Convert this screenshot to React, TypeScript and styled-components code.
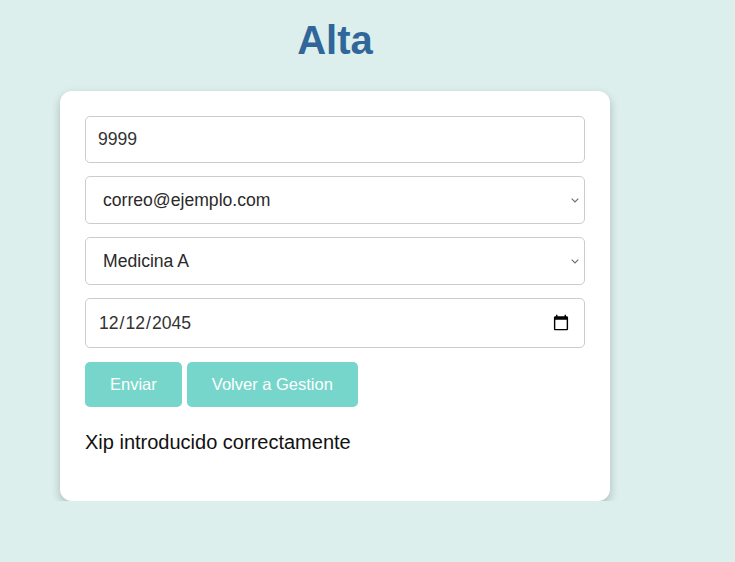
import React, { useState } from 'react'
import styled, { createGlobalStyle } from 'styled-components'

const GlobalStyle = createGlobalStyle`
  html, body {
    margin: 0;
    padding: 0;
    background-color: #dcefed;
    font-family: 'Liberation Sans', Arial, sans-serif;
  }
`

const Page = styled.div`
  width: 550px;
  margin-left: 60px;
  padding-top: 18px;
`

const Title = styled.h1`
  margin: 0 0 28px;
  text-align: center;
  font-size: 40px;
  font-weight: 700;
  color: #306699;
`

const Card = styled.form`
  box-sizing: border-box;
  background: #fff;
  border-radius: 12px;
  padding: 25px 25px 47px;
  box-shadow: 0 4px 10px rgba(0, 0, 0, 0.22);
  display: flex;
  flex-direction: column;
  gap: 13px;
`

const Field = styled.input<{ $tall?: boolean }>`
  box-sizing: border-box;
  width: 100%;
  height: ${(props) => (props.$tall ? '50px' : '47px')};
  padding: 0 12px;
  border: 1px solid #ccc;
  border-radius: 5px;
  font-family: 'Liberation Sans', Arial, sans-serif;
  font-size: 17.6px;
  color: #333;
  background: #fff;
  outline: none;
`

const SelectWrap = styled.div`
  position: relative;
`

const Select = styled.select`
  box-sizing: border-box;
  width: 100%;
  height: 48px;
  padding: 0 30px 0 17px;
  appearance: none;
  border: 1px solid #ccc;
  border-radius: 5px;
  font-family: 'Liberation Sans', Arial, sans-serif;
  font-size: 17.6px;
  color: #2a2a2a;
  background: #fff;
  outline: none;
`

const Chevron = styled.svg`
  position: absolute;
  right: 6px;
  top: 22px;
  width: 8px;
  height: 5px;
  pointer-events: none;
`

const Actions = styled.div`
  display: flex;
  gap: 5px;
  margin-top: 1px;
`

const Button = styled.button`
  height: 45px;
  padding: 0 25px;
  border: none;
  border-radius: 5px;
  background-color: #76d6cb;
  color: #fff;
  font-family: 'Liberation Sans', Arial, sans-serif;
  font-size: 16.5px;
  cursor: pointer;
`

const Message = styled.p`
  margin: 11px 0 0;
  font-size: 20px;
  color: #111;
`

function Dropdown({
  value,
  options,
  onChange,
}: {
  value: string
  options: string[]
  onChange: (v: string) => void
}) {
  return (
    <SelectWrap>
      <Select value={value} onChange={(e) => onChange(e.target.value)}>
        {options.map((o) => (
          <option key={o}>{o}</option>
        ))}
      </Select>
      <Chevron viewBox="0 0 8 5">
        <path d="M0.7 0.7 L4 4 L7.3 0.7" fill="none" stroke="#6b6b6b" strokeWidth="1.1" />
      </Chevron>
    </SelectWrap>
  )
}

export default function App() {
  const [xip, setXip] = useState('9999')
  const [email, setEmail] = useState('correo@ejemplo.com')
  const [medicine, setMedicine] = useState('Medicina A')
  const [date, setDate] = useState('2045-12-12')

  return (
    <>
      <GlobalStyle />
      <Page>
        <Title>Alta</Title>
        <Card onSubmit={(e) => e.preventDefault()}>
          <Field value={xip} onChange={(e) => setXip(e.target.value)} />
          <Dropdown value={email} options={['correo@ejemplo.com']} onChange={setEmail} />
          <Dropdown
            value={medicine}
            options={['Medicina A', 'Medicina B']}
            onChange={setMedicine}
          />
          <Field
            $tall
            type="date"
            value={date}
            onChange={(e) => setDate(e.target.value)}
          />
          <Actions>
            <Button type="submit">Enviar</Button>
            <Button type="button">Volver a Gestion</Button>
          </Actions>
          <Message>Xip introducido correctamente</Message>
        </Card>
      </Page>
    </>
  )
}
